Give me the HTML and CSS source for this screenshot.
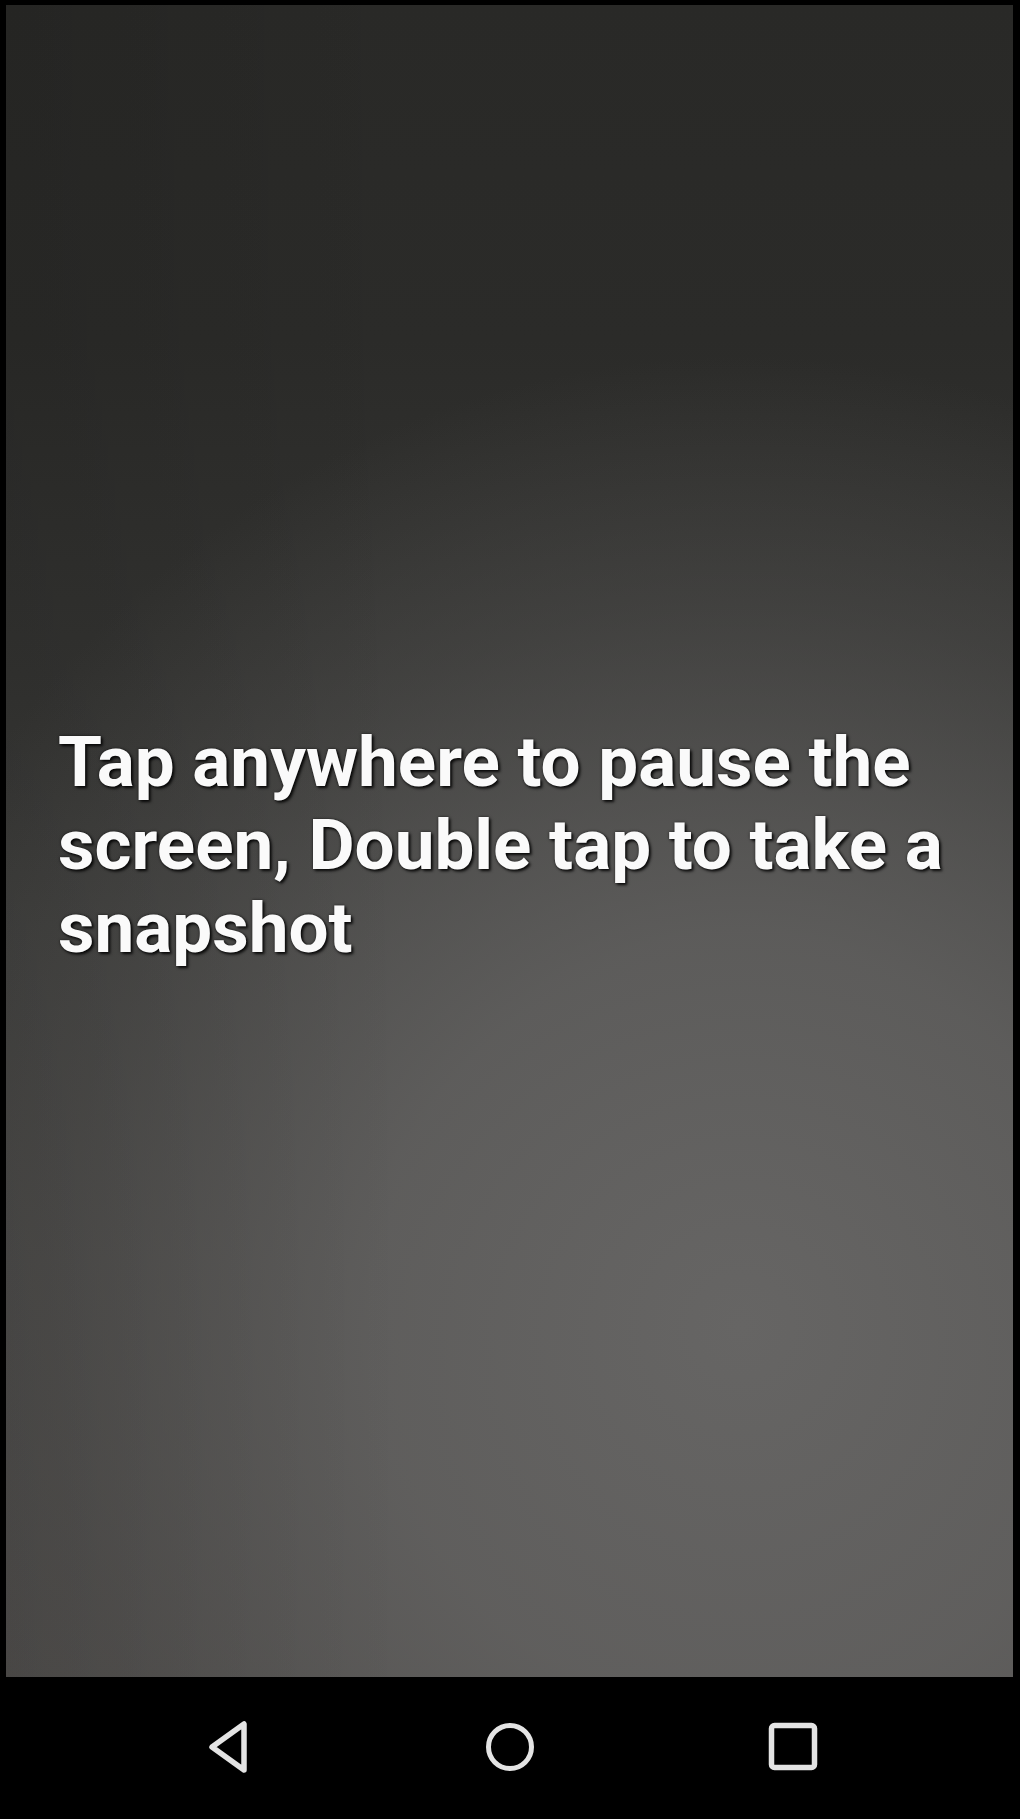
FILE: index.html
```html
<!DOCTYPE html>
<html lang="en">
<head>
<meta charset="utf-8">
<title>Snapshot camera</title>
<link rel="stylesheet" href="styles.css">
</head>
<body>
<div class="screen">
  <main class="preview">
    <p class="hint">Tap anywhere to pause the screen, Double tap to take a snapshot</p>
  </main>
  <nav class="navbar">
    <span class="nav-btn">
      <svg viewBox="0 0 60 60" width="60" height="60" aria-hidden="true">
        <path d="M47 7 L47 53 L15 30 Z" fill="none" stroke="#e4e4e4" stroke-width="5.5" stroke-linejoin="round"/>
      </svg>
    </span>
    <span class="nav-btn">
      <svg viewBox="0 0 60 60" width="60" height="60" aria-hidden="true">
        <circle cx="30" cy="30" r="21.5" fill="none" stroke="#e4e4e4" stroke-width="5"/>
      </svg>
    </span>
    <span class="nav-btn">
      <svg viewBox="0 0 60 60" width="60" height="60" aria-hidden="true">
        <rect x="8.5" y="8.5" width="43" height="42" rx="3" fill="none" stroke="#e4e4e4" stroke-width="5.5"/>
      </svg>
    </span>
  </nav>
</div>
</body>
</html>
```
FILE: styles.css
```css
html, body {
  margin: 0;
  padding: 0;
  background: #000;
}

.screen {
  width: 1020px;
  height: 1819px;
  display: flex;
  flex-direction: column;
  background: #000;
}

.preview {
  margin: 5px 7px 0 6px;
  height: 1672px;
  display: flex;
  flex-direction: column;
  justify-content: center;
  padding: 6px 48px 0 52px;
  box-sizing: border-box;
  background:
    linear-gradient(to right, rgba(0, 0, 0, 0.1) 0%, rgba(0, 0, 0, 0) 40%),
    radial-gradient(ellipse 92% 58% at 73% 79%, rgba(102, 101, 100, 1) 0%, rgba(100, 99, 98, 0.8) 40%, rgba(92, 91, 90, 0.35) 75%, rgba(90, 90, 88, 0) 100%),
    linear-gradient(to bottom, #292927 0%, #2b2b29 20%, #343432 40%, #3e3e3c 55%, #474644 75%, #4e4c4a 100%);
}

.hint {
  margin: 0;
  font-family: Roboto, "Liberation Sans", sans-serif;
  font-weight: 700;
  font-size: 71px;
  line-height: 83px;
  color: #fafafa;
  text-shadow: 2px 2px 3px rgba(0, 0, 0, 0.85), 0 0 3px rgba(0, 0, 0, 0.6);
}

.navbar {
  flex: 1;
  display: grid;
  grid-template-columns: repeat(3, 283px);
  justify-content: center;
  align-items: center;
  padding-bottom: 2px;
}

.nav-btn {
  display: flex;
  justify-content: center;
  align-items: center;
}

.nav-btn svg {
  display: block;
  filter: blur(0.6px);
}
```
